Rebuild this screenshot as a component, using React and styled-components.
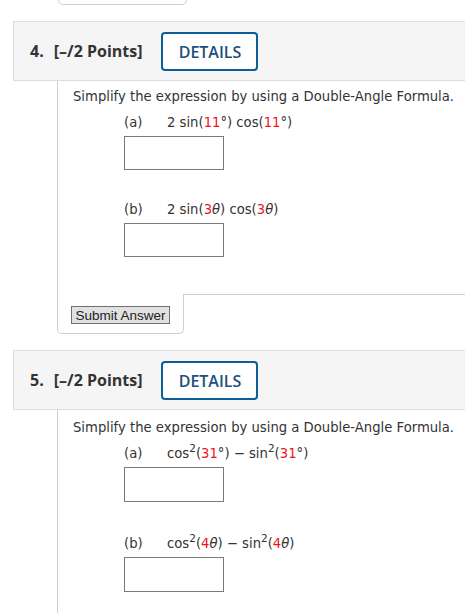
import React from "react";
import styled, { createGlobalStyle } from "styled-components";

const Global = createGlobalStyle`
  html, body { margin: 0; padding: 0; background: #fff; overflow: hidden; }
  body { width: 465px; height: 613px; }
`;

const Page = styled.div`
  width: 465px;
  height: 613px;
  overflow: hidden;
`;

const PrevTail = styled.div`
  margin-left: 58px;
  width: 127px;
  height: 4px;
  border: 1px solid #cfcfcf;
  border-top: none;
  border-radius: 0 0 5px 5px;
`;

const Question = styled.section`
  margin-top: 16px;
  margin-left: 13px;
`;

const Header = styled.div`
  height: 58px;
  background: #f5f5f5;
  border: 1px solid #dedede;
  border-right: none;
  display: flex;
  align-items: center;
  padding-left: 16px;
  gap: 19px;
`;

const Title = styled.div`
  font-family: "Open Sans", sans-serif;
  font-weight: 700;
  font-size: 16px;
  color: #333;
  display: flex;
  gap: 10px;
`;

const DetailsButton = styled.button`
  width: 97px;
  height: 39px;
  border: 2px solid #0a5f98;
  border-radius: 4px;
  background: #fff;
  color: #1d4f7c;
  font-family: "Open Sans", sans-serif;
  font-weight: 600;
  font-size: 16px;
  padding: 0;
  margin-top: 1px;
`;

const Body = styled.div`
  margin-left: 44px;
  border-left: 1px solid #cfcfcf;
  padding-left: 15px;
  padding-top: ${(p) => p.$top}px;
  font-family: "DejaVu Sans", Verdana, sans-serif;
  font-size: 13.2px;
  color: #333;
`;

const Prompt = styled.div`
  line-height: 18px;
  white-space: nowrap;
`;

const Parts = styled.div`
  display: flex;
  flex-direction: column;
  gap: ${(p) => p.$gap}px;
  margin-top: 8px;
  margin-left: 51px;
  padding-bottom: ${(p) => p.$bottom}px;
`;

const Part = styled.div`
  display: flex;
  flex-direction: column;
  gap: 4px;
`;

const PartLine = styled.div`
  display: flex;
  line-height: 18px;
  white-space: nowrap;
`;

const Label = styled.span`
  width: 43px;
`;

const Red = styled.span`
  color: #f0141e;
`;

const Sup = styled.sup`
  font-size: 10.5px;
  line-height: 0;
  vertical-align: 6px;
`;

const AnswerBox = styled.div`
  width: 98px;
  height: ${(p) => p.$h || 32}px;
  border: 1px solid #7a7a7a;
  background: #fff;
`;

const SubmitRow = styled.div`
  display: flex;
  margin-left: 44px;
`;

const SubmitCell = styled.div`
  width: 127px;
  border: 1px solid #cfcfcf;
  border-top: none;
  border-radius: 0 0 5px 5px;
  padding: 12px 0 9px 13px;
  box-sizing: border-box;
`;

const Filler = styled.div`
  flex: 1;
  border-top: 1px solid #cfcfcf;
`;

const SubmitButton = styled.button`
  width: 99px;
  height: 18px;
  padding: 0;
  background: #e1e1e1;
  border: 1px solid #707070;
  font-family: "Liberation Sans", Arial, sans-serif;
  font-size: 13.5px;
  color: #222;
  display: block;
`;

const Theta = () => <i>θ</i>;

function QHeader({ num }) {
  return (
    <Header>
      <Title>
        <span>{num}.</span>
        <span>[–/2 Points]</span>
      </Title>
      <DetailsButton>DETAILS</DetailsButton>
    </Header>
  );
}

export default function App() {
  return (
    <Page>
      <Global />
      <PrevTail />
      <Question>
        <QHeader num={4} />
        <Body $top={7}>
          <Prompt>Simplify the expression by using a Double-Angle Formula.</Prompt>
          <Parts $gap={31} $bottom={37}>
            <Part>
              <PartLine>
                <Label>(a)</Label>
                <span>
                  2 sin(<Red>11</Red>°) cos(<Red>11</Red>°)
                </span>
              </PartLine>
              <AnswerBox />
            </Part>
            <Part>
              <PartLine>
                <Label>(b)</Label>
                <span>
                  2 sin(<Red>3</Red><Theta />) cos(<Red>3</Red><Theta />)
                </span>
              </PartLine>
              <AnswerBox />
            </Part>
          </Parts>
        </Body>
        <SubmitRow>
          <SubmitCell>
            <SubmitButton>Submit Answer</SubmitButton>
          </SubmitCell>
          <Filler />
        </SubmitRow>
      </Question>
      <Question>
        <QHeader num={5} />
        <Body $top={9}>
          <Prompt>Simplify the expression by using a Double-Angle Formula.</Prompt>
          <Parts $gap={33} $bottom={30}>
            <Part>
              <PartLine>
                <Label>(a)</Label>
                <span>
                  cos<Sup>2</Sup>(<Red>31</Red>°) − sin<Sup>2</Sup>(<Red>31</Red>°)
                </span>
              </PartLine>
              <AnswerBox $h={33} />
            </Part>
            <Part>
              <PartLine>
                <Label>(b)</Label>
                <span>
                  cos<Sup>2</Sup>(<Red>4</Red><Theta />) − sin<Sup>2</Sup>(<Red>4</Red><Theta />)
                </span>
              </PartLine>
              <AnswerBox $h={33} />
            </Part>
          </Parts>
        </Body>
      </Question>
    </Page>
  );
}
